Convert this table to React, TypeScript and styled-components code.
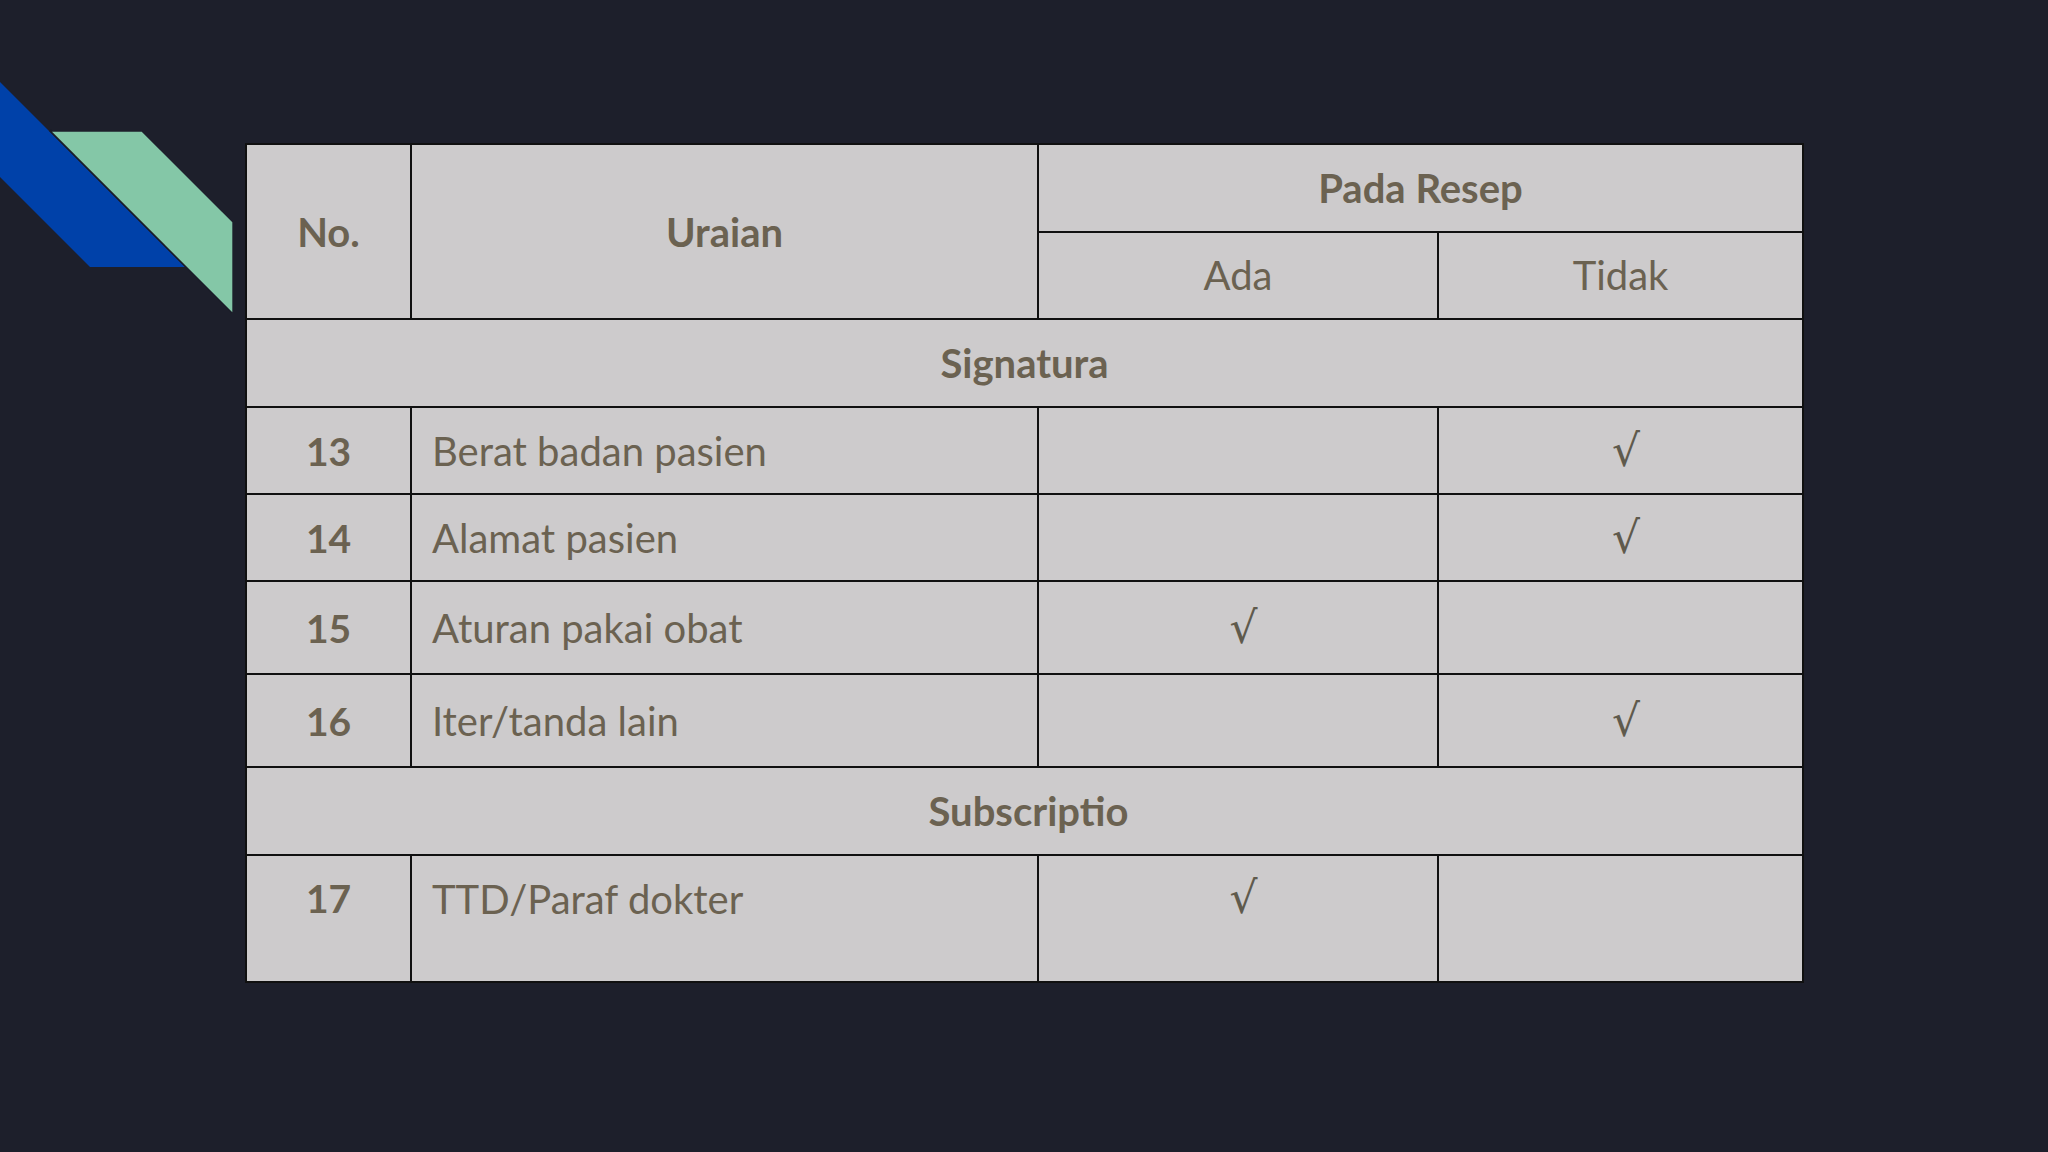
import React from 'react'
import styled, { createGlobalStyle } from 'styled-components'

const GlobalStyle = createGlobalStyle`
  html, body {
    margin: 0;
    padding: 0;
    background: #1d1f2b;
  }
`

type Row = {
  no: string
  text: string
  ada?: boolean
  tidak?: boolean
  h: number
  top?: boolean
}

const signatura: Row[] = [
  { no: '13', text: 'Berat badan pasien', tidak: true, h: 87 },
  { no: '14', text: 'Alamat pasien', tidak: true, h: 87 },
  { no: '15', text: 'Aturan pakai obat', ada: true, h: 93 },
  { no: '16', text: 'Iter/tanda lain', tidak: true, h: 93 },
]

const subscriptio: Row[] = [
  { no: '17', text: 'TTD/Paraf dokter', ada: true, h: 127, top: true },
]

const Slide = () => {
  const renderRow = (r: Row) => (
    <Tr key={r.no} $h={r.h}>
      <NoCell $top={r.top}>{r.no}</NoCell>
      <TextCell $top={r.top}>{r.text}</TextCell>
      <CheckCell $top={r.top}>{r.ada ? '√' : ''}</CheckCell>
      <CheckCell $top={r.top}>{r.tidak ? '√' : ''}</CheckCell>
    </Tr>
  )

  return (
    <Page>
      <GlobalStyle />

      {/* corner ribbons */}
      <Ribbon width="240" height="320" viewBox="0 0 240 320">
        <polygon points="0,82 185,267 90,267 0,177" fill="#0041a9" />
        <line x1="50" y1="130" x2="232" y2="312" stroke="#1a1d28" strokeWidth="3" />
        <polygon points="52,131.7 141.7,131.7 232.3,222.3 232.3,312.3" fill="#84c7a7" />
      </Ribbon>

      <Table>
        <colgroup>
          <col style={{ width: 165 }} />
          <col style={{ width: 627 }} />
          <col style={{ width: 400 }} />
          <col style={{ width: 365 }} />
        </colgroup>
        <tbody>
          <Tr $h={87.5}>
            <HeadCell rowSpan={2}>No.</HeadCell>
            <HeadCell rowSpan={2}>Uraian</HeadCell>
            <HeadCell colSpan={2}>Pada Resep</HeadCell>
          </Tr>
          <Tr $h={87.5}>
            <SubHeadCell>Ada</SubHeadCell>
            <SubHeadCell>Tidak</SubHeadCell>
          </Tr>
          <Tr $h={88}>
            <SectionCell colSpan={4}>Signatura</SectionCell>
          </Tr>
          {signatura.map(renderRow)}
          <Tr $h={87.5}>
            <SectionCell colSpan={4} $shift={8}>Subscriptio</SectionCell>
          </Tr>
          {subscriptio.map(renderRow)}
        </tbody>
      </Table>
    </Page>
  )
}

export default function App() {
  return <Slide />
}

const Page = styled.div`
  position: relative;
  width: 2048px;
  height: 1152px;
  background: #1d1f2b;
  padding: 143px 0 0 245px;
  box-sizing: border-box;
  overflow: hidden;
  font-family: Lato, 'Open Sans', sans-serif;
`

const Ribbon = styled.svg`
  position: absolute;
  left: 0;
  top: 0;
`

const Table = styled.table`
  position: relative;
  width: 1557px;
  table-layout: fixed;
  border-collapse: collapse;
  border: 2px solid #101010;
  background: #cdcbcc;
  color: #6b6251;
`

const Tr = styled.tr<{ $h: number }>`
  height: ${(p) => p.$h}px;
`

const Cell = styled.td<{ $top?: boolean }>`
  border: 2px solid #101010;
  padding: 0;
  vertical-align: ${(p) => (p.$top ? 'top' : 'middle')};
  padding-top: ${(p) => (p.$top ? '19px' : '0')};
  box-sizing: border-box;
`

const HeadCell = styled(Cell)`
  text-align: center;
  font-weight: 700;
  font-size: 40px;
`

const SubHeadCell = styled(Cell)`
  text-align: center;
  font-weight: 400;
  font-size: 40px;
`

const SectionCell = styled(Cell)<{ $shift?: number }>`
  text-align: center;
  font-weight: 700;
  font-size: 40px;
  padding-left: ${(p) => p.$shift || 0}px;
`

const NoCell = styled(Cell)`
  text-align: center;
  font-weight: 700;
  font-size: 39px;
`

const TextCell = styled(Cell)`
  padding-left: 20px;
  font-size: 40px;
`

const CheckCell = styled(Cell)`
  text-align: center;
  padding-left: 11px;
  font-size: 44px;
  line-height: 1;
  font-family: 'DejaVu Sans', sans-serif;
  color: #5f5a4c;
  padding-top: ${(p) => (p.$top ? '20px' : '0')};
`
